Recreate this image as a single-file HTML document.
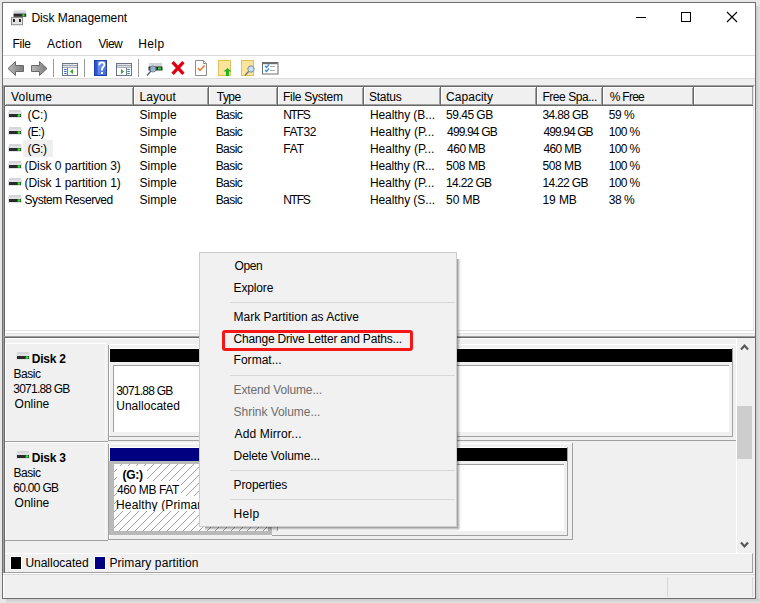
<!DOCTYPE html>
<html><head><meta charset="utf-8"><style>
html,body{margin:0;padding:0;}
body{width:760px;height:603px;position:relative;overflow:hidden;background:#e7e7e7;font-family:"Liberation Sans",sans-serif;}
.r{position:absolute;}
.t{position:absolute;font-size:12.0px;line-height:12px;white-space:pre;color:#000;}
</style></head><body>
<div class="r" style="left:756px;top:6px;width:4px;height:597px;background:linear-gradient(to right, #cbcbcb, #e2e2e2);"></div>
<div class="r" style="left:6px;top:599px;width:754px;height:4px;background:linear-gradient(to bottom, #cbcbcb, #e2e2e2);"></div>
<div class="r" style="left:2px;top:2px;width:754px;height:597px;background:#fff;box-sizing:border-box;border:1px solid #6f6f6f"></div>
<svg class="r" style="left:10px;top:9px" width="18" height="17" viewBox="0 0 18 17">
<defs><linearGradient id="dg" x1="0" y1="0" x2="0" y2="1"><stop offset="0" stop-color="#eceef0"/><stop offset="1" stop-color="#c4c7cb"/></linearGradient></defs>
<rect x="3.5" y="0.7" width="12.7" height="4.2" rx="1" fill="url(#dg)"/>
<rect x="3.5" y="4.7" width="12.7" height="3.1" fill="#2a2a2a"/>
<circle cx="13.5" cy="6.3" r="1.6" fill="#33ff33" fill-opacity="0.35"/>
<circle cx="13.5" cy="6.3" r="1" fill="#33ee33"/>
<rect x="1.5" y="8.5" width="11" height="7.2" fill="#e4e4e4" stroke="#8c8c8c" stroke-width="1"/>
<rect x="3" y="10" width="1.9" height="3" fill="#1a1a1a"/>
<rect x="9" y="10" width="1.9" height="3" fill="#1a1a1a"/>
</svg>
<div class="r" style="left:636px;top:17px;width:10px;height:1px;background:#000;"></div>
<div class="r" style="left:681px;top:12px;width:10px;height:10px;background:transparent;box-sizing:border-box;border:1px solid #000"></div>
<svg class="r" style="left:726px;top:11px" width="12" height="12" viewBox="0 0 12 12"><path d="M1 1 L11 11 M11 1 L1 11" stroke="#000" stroke-width="1.1"/></svg>
<div class="r" style="left:3px;top:55px;width:752px;height:1px;background:#d9d9d9;"></div>
<svg class="r" style="left:7px;top:60px" width="42" height="17" viewBox="0 0 42 17">
<defs><linearGradient id="ag" x1="0" y1="0" x2="1" y2="0"><stop offset="0" stop-color="#b8b8b8"/><stop offset="1" stop-color="#7c7c7c"/></linearGradient></defs>
<path d="M1 8.5 L8.5 1.5 L8.5 5.5 L16.5 5.5 L16.5 11.5 L8.5 11.5 L8.5 15.5 Z" fill="url(#ag)" stroke="#6a6a6a" stroke-width="1"/>
<path d="M40 8.5 L32.5 1.5 L32.5 5.5 L24.5 5.5 L24.5 11.5 L32.5 11.5 L32.5 15.5 Z" fill="url(#ag)" stroke="#6a6a6a" stroke-width="1"/>
</svg>
<div class="r" style="left:53px;top:59px;width:1px;height:18px;background:#9a9a9a;"></div>
<div class="r" style="left:84px;top:59px;width:1px;height:18px;background:#9a9a9a;"></div>
<div class="r" style="left:138px;top:59px;width:1px;height:18px;background:#9a9a9a;"></div>
<svg class="r" style="left:62px;top:63px" width="16" height="13" viewBox="0 0 16 13">
<rect x="0.5" y="0.5" width="15" height="12" fill="#fff" stroke="#6a7688" stroke-width="1"/>
<rect x="1" y="1" width="14" height="1.4" fill="#dde2e8"/>
<rect x="11.6" y="1.2" width="1" height="1" fill="#fff"/><rect x="13.4" y="1.2" width="1" height="1" fill="#fff"/>
<rect x="1" y="2.4" width="14" height="0.9" fill="#6a7688"/>
<rect x="1" y="3.3" width="14" height="1" fill="#dde2e8"/>
<rect x="1" y="4.3" width="14" height="0.7" fill="#8a94a4"/>
<rect x="2" y="6.0" width="2.6" height="1.1" rx="0.5" fill="#2f6fc4"/><rect x="2" y="8.0" width="2.6" height="1.1" rx="0.5" fill="#2f6fc4"/><rect x="2" y="10.0" width="2.6" height="1.1" rx="0.5" fill="#2f6fc4"/><rect x="4.9" y="4.8" width="1" height="7.4" fill="#6a7688"/><path d="M8 8.6 L11 5.9 L11 11.3 Z" fill="#2eac22"/>
</svg>
<svg class="r" style="left:94px;top:60px" width="14" height="17" viewBox="0 0 14 17">
<defs><linearGradient id="hg" x1="0" y1="0" x2="1" y2="1"><stop offset="0" stop-color="#7a9cf0"/><stop offset="1" stop-color="#4068d4"/></linearGradient></defs>
<rect x="0" y="0" width="13" height="16" fill="#1f3fae"/>
<rect x="1" y="1" width="2.5" height="14" fill="#2d54cc"/>
<rect x="3.5" y="1" width="8.5" height="14" fill="url(#hg)"/>
<path d="M5.3 5.2 C5.3 3.2, 6.6 2.4, 7.9 2.4 C9.3 2.4, 10.4 3.3, 10.4 4.8 C10.4 6.6, 8 7, 8 9.2 L8 10.6" stroke="#fff" stroke-width="1.9" fill="none"/>
<rect x="7" y="12" width="2" height="2" fill="#fff"/>
</svg>
<svg class="r" style="left:116px;top:63px" width="16" height="13" viewBox="0 0 16 13">
<rect x="0.5" y="0.5" width="15" height="12" fill="#fff" stroke="#6a7688" stroke-width="1"/>
<rect x="1" y="1" width="14" height="1.4" fill="#dde2e8"/>
<rect x="11.6" y="1.2" width="1" height="1" fill="#fff"/><rect x="13.4" y="1.2" width="1" height="1" fill="#fff"/>
<rect x="1" y="2.4" width="14" height="0.9" fill="#6a7688"/>
<rect x="1" y="3.3" width="14" height="1" fill="#dde2e8"/>
<rect x="1" y="4.3" width="14" height="0.7" fill="#8a94a4"/>
<rect x="11.3" y="6.0" width="2.6" height="1.1" rx="0.5" fill="#2f6fc4"/><rect x="11.3" y="8.0" width="2.6" height="1.1" rx="0.5" fill="#2f6fc4"/><rect x="11.3" y="10.0" width="2.6" height="1.1" rx="0.5" fill="#2f6fc4"/><rect x="10.1" y="4.8" width="1" height="7.4" fill="#6a7688"/><path d="M8 8.6 L5 5.9 L5 11.3 Z" fill="#2eac22"/>
</svg>
<svg class="r" style="left:146px;top:62px" width="17" height="15" viewBox="0 0 17 15">
<rect x="3" y="1" width="13" height="4" fill="#d0d3d8"/>
<rect x="2.5" y="4.5" width="14" height="4" fill="#2e2e2e"/>
<rect x="12" y="5.5" width="3" height="2" fill="#33e033"/>
<circle cx="7" cy="7" r="3" fill="#a9c8e8" fill-opacity="0.85" stroke="#6f7f90" stroke-width="1"/>
<path d="M5 9 L1 13.5" stroke="#607080" stroke-width="1.6"/>
</svg>
<svg class="r" style="left:170px;top:60px" width="16" height="16" viewBox="0 0 16 16"><path d="M2.6 2.1 L13.4 13.9 M13.4 2.1 L2.6 13.9" stroke="#dc0012" stroke-width="3.3"/></svg>
<svg class="r" style="left:194px;top:60px" width="14" height="17" viewBox="0 0 14 17">
<path d="M1.5 0.5 L9.5 0.5 L12.5 3.5 L12.5 15.5 L1.5 15.5 Z" fill="#fff" stroke="#8c8c8c"/>
<path d="M9.5 0.5 L9.5 3.5 L12.5 3.5" fill="#e8e8e8" stroke="#8c8c8c"/>
<path d="M4 8 L6 10.5 L10.5 5.5" fill="none" stroke="#f07020" stroke-width="1.4"/>
</svg>
<svg class="r" style="left:218px;top:60px" width="15" height="17" viewBox="0 0 15 17">
<rect x="0.5" y="0.5" width="12" height="15" fill="#fce59a" stroke="#e0c060"/>
<path d="M9.5 8 L13.5 11.5 L11 11.5 L11 16 L8 16 L8 11.5 L5.5 11.5 Z" fill="#22b422"/>
</svg>
<svg class="r" style="left:241px;top:60px" width="15" height="17" viewBox="0 0 15 17">
<rect x="0.5" y="0.5" width="12" height="15" fill="#fce59a" stroke="#e0c060"/>
<circle cx="10" cy="9" r="3.2" fill="#c8e0f4" stroke="#7a8a9a"/>
<path d="M7.6 11.5 L4 15.5" stroke="#6a7a8a" stroke-width="1.4"/>
</svg>
<svg class="r" style="left:262px;top:62px" width="17" height="13" viewBox="0 0 17 13">
<rect x="0.5" y="0.5" width="15.5" height="11.5" fill="#fff" stroke="#6d6d6d" stroke-width="1"/><rect x="1" y="1" width="14.5" height="1.2" fill="#6d6d6d"/>
<path d="M3 4 L4.5 5.5 L7 2.5 M3 8 L4.5 9.5 L7 6.5" fill="none" stroke="#2d8ae0" stroke-width="1.2"/>
<rect x="8" y="4" width="5" height="1" fill="#b0b0b0"/><rect x="8" y="8" width="5" height="1" fill="#b0b0b0"/>
</svg>
<div class="r" style="left:3px;top:78px;width:752px;height:520px;background:#f0f0f0;"></div>
<div class="r" style="left:3px;top:78px;width:752px;height:1px;background:#dcdcdc;"></div>
<div class="r" style="left:3px;top:85px;width:752px;height:247px;background:#fff;box-sizing:border-box;border-top:1px solid #a0a0a0;border-left:1px solid #a0a0a0;border-right:1px solid #fff;border-bottom:1px solid #fff"></div>
<div class="r" style="left:4px;top:86px;width:750px;height:245px;background:#fff;box-sizing:border-box;border-top:1px solid #696969;border-left:1px solid #696969;border-right:1px solid #e3e3e3;border-bottom:1px solid #e3e3e3"></div>
<div class="r" style="left:5px;top:87px;width:748px;height:19px;background:#f0f0f0;box-sizing:border-box;border-top:1px solid #fff;border-bottom:1px solid #696969"></div>
<div class="r" style="left:5px;top:104px;width:748px;height:1px;background:#a0a0a0;"></div>
<div class="r" style="left:5px;top:87px;width:1px;height:18px;background:#fff;"></div>
<div class="r" style="left:132px;top:88px;width:1px;height:16px;background:#a0a0a0;"></div>
<div class="r" style="left:133px;top:87px;width:1px;height:18px;background:#696969;"></div>
<div class="r" style="left:134px;top:88px;width:1px;height:16px;background:#fff;"></div>
<div class="r" style="left:207px;top:88px;width:1px;height:16px;background:#a0a0a0;"></div>
<div class="r" style="left:208px;top:87px;width:1px;height:18px;background:#696969;"></div>
<div class="r" style="left:209px;top:88px;width:1px;height:16px;background:#fff;"></div>
<div class="r" style="left:276px;top:88px;width:1px;height:16px;background:#a0a0a0;"></div>
<div class="r" style="left:277px;top:87px;width:1px;height:18px;background:#696969;"></div>
<div class="r" style="left:278px;top:88px;width:1px;height:16px;background:#fff;"></div>
<div class="r" style="left:362px;top:88px;width:1px;height:16px;background:#a0a0a0;"></div>
<div class="r" style="left:363px;top:87px;width:1px;height:18px;background:#696969;"></div>
<div class="r" style="left:364px;top:88px;width:1px;height:16px;background:#fff;"></div>
<div class="r" style="left:439px;top:88px;width:1px;height:16px;background:#a0a0a0;"></div>
<div class="r" style="left:440px;top:87px;width:1px;height:18px;background:#696969;"></div>
<div class="r" style="left:441px;top:88px;width:1px;height:16px;background:#fff;"></div>
<div class="r" style="left:535px;top:88px;width:1px;height:16px;background:#a0a0a0;"></div>
<div class="r" style="left:536px;top:87px;width:1px;height:18px;background:#696969;"></div>
<div class="r" style="left:537px;top:88px;width:1px;height:16px;background:#fff;"></div>
<div class="r" style="left:601px;top:88px;width:1px;height:16px;background:#a0a0a0;"></div>
<div class="r" style="left:602px;top:87px;width:1px;height:18px;background:#696969;"></div>
<div class="r" style="left:603px;top:88px;width:1px;height:16px;background:#fff;"></div>
<div class="r" style="left:692px;top:88px;width:1px;height:16px;background:#a0a0a0;"></div>
<div class="r" style="left:693px;top:87px;width:1px;height:18px;background:#696969;"></div>
<div class="r" style="left:694px;top:88px;width:1px;height:16px;background:#fff;"></div>
<div class="r" style="left:752px;top:87px;width:1px;height:18px;background:#a0a0a0;"></div>
<div class="r" style="left:23px;top:140px;width:30px;height:17px;background:#efefef;"></div>
<svg class="r" style="left:8px;top:110px" width="14" height="8" viewBox="0 0 14 8">
<rect x="1" y="0" width="12" height="2" fill="#d4d6da"/>
<rect x="0" y="2" width="14" height="6" fill="#dfe1e4"/>
<rect x="1" y="4" width="12" height="3" fill="#2a2a2a"/>
<rect x="9.5" y="4.5" width="3" height="2" fill="#22dd22"/>
<rect x="10.5" y="4" width="1" height="3" fill="#33ee33"/>
</svg>
<svg class="r" style="left:8px;top:127px" width="14" height="8" viewBox="0 0 14 8">
<rect x="1" y="0" width="12" height="2" fill="#d4d6da"/>
<rect x="0" y="2" width="14" height="6" fill="#dfe1e4"/>
<rect x="1" y="4" width="12" height="3" fill="#2a2a2a"/>
<rect x="9.5" y="4.5" width="3" height="2" fill="#22dd22"/>
<rect x="10.5" y="4" width="1" height="3" fill="#33ee33"/>
</svg>
<svg class="r" style="left:8px;top:144px" width="14" height="8" viewBox="0 0 14 8">
<rect x="1" y="0" width="12" height="2" fill="#d4d6da"/>
<rect x="0" y="2" width="14" height="6" fill="#dfe1e4"/>
<rect x="1" y="4" width="12" height="3" fill="#2a2a2a"/>
<rect x="9.5" y="4.5" width="3" height="2" fill="#22dd22"/>
<rect x="10.5" y="4" width="1" height="3" fill="#33ee33"/>
</svg>
<svg class="r" style="left:8px;top:161px" width="14" height="8" viewBox="0 0 14 8">
<rect x="1" y="0" width="12" height="2" fill="#d4d6da"/>
<rect x="0" y="2" width="14" height="6" fill="#dfe1e4"/>
<rect x="1" y="4" width="12" height="3" fill="#2a2a2a"/>
<rect x="9.5" y="4.5" width="3" height="2" fill="#22dd22"/>
<rect x="10.5" y="4" width="1" height="3" fill="#33ee33"/>
</svg>
<svg class="r" style="left:8px;top:178px" width="14" height="8" viewBox="0 0 14 8">
<rect x="1" y="0" width="12" height="2" fill="#d4d6da"/>
<rect x="0" y="2" width="14" height="6" fill="#dfe1e4"/>
<rect x="1" y="4" width="12" height="3" fill="#2a2a2a"/>
<rect x="9.5" y="4.5" width="3" height="2" fill="#22dd22"/>
<rect x="10.5" y="4" width="1" height="3" fill="#33ee33"/>
</svg>
<svg class="r" style="left:8px;top:195px" width="14" height="8" viewBox="0 0 14 8">
<rect x="1" y="0" width="12" height="2" fill="#d4d6da"/>
<rect x="0" y="2" width="14" height="6" fill="#dfe1e4"/>
<rect x="1" y="4" width="12" height="3" fill="#2a2a2a"/>
<rect x="9.5" y="4.5" width="3" height="2" fill="#22dd22"/>
<rect x="10.5" y="4" width="1" height="3" fill="#33ee33"/>
</svg>
<div class="r" style="left:3px;top:332px;width:752px;height:1px;background:#fff;"></div>
<div class="r" style="left:3px;top:333px;width:752px;height:1px;background:#e3e3e3;"></div>
<div class="r" style="left:3px;top:330px;width:1px;height:8px;background:#a0a0a0;"></div>
<div class="r" style="left:4px;top:330px;width:1px;height:8px;background:#696969;"></div>
<div class="r" style="left:5px;top:331px;width:1px;height:6px;background:#fff;"></div>
<div class="r" style="left:3px;top:336px;width:752px;height:1px;background:#a0a0a0;"></div>
<div class="r" style="left:4px;top:337px;width:751px;height:1px;background:#696969;"></div>
<div class="r" style="left:3px;top:336px;width:1px;height:237px;background:#a0a0a0;"></div>
<div class="r" style="left:4px;top:337px;width:1px;height:236px;background:#696969;"></div>
<div class="r" style="left:5px;top:338px;width:732px;height:1px;background:#fff;"></div>
<div class="r" style="left:5px;top:343px;width:103px;height:98px;background:#f0f0f0;"></div>
<div class="r" style="left:5px;top:343px;width:102px;height:1px;background:#fff;"></div>
<div class="r" style="left:5px;top:343px;width:1px;height:98px;background:#fff;"></div>
<div class="r" style="left:105px;top:344px;width:1px;height:96px;background:#fafafa;"></div>
<div class="r" style="left:5px;top:441px;width:103px;height:1px;background:#a0a0a0;"></div>
<svg class="r" style="left:16px;top:352px" width="14" height="8" viewBox="0 0 14 8">
<rect x="1" y="0" width="12" height="2" fill="#d4d6da"/>
<rect x="0" y="2" width="14" height="6" fill="#dfe1e4"/>
<rect x="1" y="4" width="12" height="3" fill="#2a2a2a"/>
<rect x="9.5" y="4.5" width="3" height="2" fill="#22dd22"/>
<rect x="10.5" y="4" width="1" height="3" fill="#33ee33"/>
</svg>
<div class="r" style="left:108px;top:345px;width:1px;height:96px;background:#a0a0a0;"></div>
<div class="r" style="left:109px;top:345px;width:1px;height:96px;background:#fff;"></div>
<div class="r" style="left:5px;top:442px;width:103px;height:98px;background:#f0f0f0;"></div>
<div class="r" style="left:5px;top:442px;width:102px;height:1px;background:#fff;"></div>
<div class="r" style="left:5px;top:442px;width:1px;height:98px;background:#fff;"></div>
<div class="r" style="left:105px;top:443px;width:1px;height:96px;background:#fafafa;"></div>
<div class="r" style="left:5px;top:540px;width:103px;height:1px;background:#a0a0a0;"></div>
<svg class="r" style="left:16px;top:451px" width="14" height="8" viewBox="0 0 14 8">
<rect x="1" y="0" width="12" height="2" fill="#d4d6da"/>
<rect x="0" y="2" width="14" height="6" fill="#dfe1e4"/>
<rect x="1" y="4" width="12" height="3" fill="#2a2a2a"/>
<rect x="9.5" y="4.5" width="3" height="2" fill="#22dd22"/>
<rect x="10.5" y="4" width="1" height="3" fill="#33ee33"/>
</svg>
<div class="r" style="left:108px;top:444px;width:1px;height:96px;background:#a0a0a0;"></div>
<div class="r" style="left:109px;top:444px;width:1px;height:96px;background:#fff;"></div>
<div class="r" style="left:108px;top:344px;width:628px;height:1px;background:#fff;"></div>
<div class="r" style="left:108px;top:440px;width:628px;height:1px;background:#a0a0a0;"></div>
<div class="r" style="left:110px;top:348px;width:623px;height:1px;background:#fff;"></div>
<div class="r" style="left:110px;top:349px;width:622px;height:13px;background:#000;"></div>
<div class="r" style="left:732px;top:348px;width:1px;height:88px;background:#a0a0a0;"></div>
<div class="r" style="left:109px;top:436px;width:624px;height:1px;background:#a0a0a0;"></div>
<div class="r" style="left:113px;top:365px;width:616px;height:67px;background:#fff;"></div>
<div class="r" style="left:113px;top:365px;width:616px;height:1px;background:#a0a0a0;"></div>
<div class="r" style="left:113px;top:365px;width:1px;height:67px;background:#a0a0a0;"></div>
<div class="r" style="left:108px;top:443px;width:465px;height:1px;background:#fff;"></div>
<div class="r" style="left:108px;top:539px;width:465px;height:1px;background:#a0a0a0;"></div>
<div class="r" style="left:572px;top:443px;width:1px;height:97px;background:#a0a0a0;"></div>
<div class="r" style="left:110px;top:447px;width:162px;height:1px;background:#fff;"></div>
<div class="r" style="left:110px;top:448px;width:162px;height:13px;background:#000080;"></div>
<svg class="r" style="left:109px;top:461px" width="163" height="74" viewBox="0 0 163 74">
<defs><pattern id="hp" patternUnits="userSpaceOnUse" x="0" y="0" width="8" height="8"><path d="M0 8 L8 0 M-2 2 L2 -2 M6 10 L10 6" stroke="#a0a0a0" stroke-width="1"/></pattern></defs>
<rect x="0" y="0" width="163" height="74" fill="#b9b9b9"/>
<rect x="5" y="3" width="154" height="67" fill="#fff"/>
<rect x="5" y="3" width="154" height="67" fill="url(#hp)"/>
</svg>
<div class="r" style="left:117px;top:466px;width:30px;height:15px;background:#fff;"></div>
<div class="r" style="left:117px;top:481px;width:64px;height:15px;background:#fff;"></div>
<div class="r" style="left:117px;top:496px;width:83px;height:15px;background:#fff;"></div>
<div class="r" style="left:276px;top:447px;width:292px;height:1px;background:#fff;"></div>
<div class="r" style="left:276px;top:448px;width:291px;height:13px;background:#000;"></div>
<div class="r" style="left:567px;top:447px;width:1px;height:89px;background:#a0a0a0;"></div>
<div class="r" style="left:272px;top:535px;width:296px;height:1px;background:#a0a0a0;"></div>
<div class="r" style="left:277px;top:464px;width:287px;height:67px;background:#fff;"></div>
<div class="r" style="left:277px;top:464px;width:287px;height:1px;background:#a0a0a0;"></div>
<div class="r" style="left:277px;top:464px;width:1px;height:67px;background:#a0a0a0;"></div>
<div class="r" style="left:736px;top:338px;width:1px;height:215px;background:#fff;"></div>
<div class="r" style="left:737px;top:338px;width:16px;height:215px;background:#f0f0f0;"></div>
<svg class="r" style="left:740px;top:343px" width="9" height="8" viewBox="0 0 9 8"><path d="M1 6.5 L4.5 2.5 L8 6.5" fill="none" stroke="#555" stroke-width="2.1"/></svg>
<svg class="r" style="left:740px;top:541px" width="9" height="8" viewBox="0 0 9 8"><path d="M1 1.5 L4.5 5.5 L8 1.5" fill="none" stroke="#555" stroke-width="2.1"/></svg>
<div class="r" style="left:737px;top:406px;width:15px;height:53px;background:#cdcdcd;"></div>
<div class="r" style="left:5px;top:553px;width:748px;height:20px;background:#f0f0f0;box-sizing:border-box;border-top:1px solid #fff;border-right:1px solid #a0a0a0;border-bottom:1px solid #a0a0a0"></div>
<div class="r" style="left:10px;top:556px;width:12px;height:14px;background:#000;box-sizing:border-box;border:1px solid #fff"></div>
<div class="r" style="left:94px;top:556px;width:12px;height:14px;background:#000080;box-sizing:border-box;border:1px solid #fff"></div>
<div class="r" style="left:3px;top:573px;width:752px;height:1px;background:#fff;"></div>
<div class="r" style="left:3px;top:574px;width:752px;height:1px;background:#dadada;"></div>
<div class="r" style="left:3px;top:575px;width:752px;height:23px;background:#f0f0f0;box-sizing:border-box;border-left:1px solid #fff"></div>
<div class="r" style="left:667px;top:577px;width:1px;height:20px;background:#d7d7d7;"></div>
<div class="r" style="left:752px;top:577px;width:1px;height:20px;background:#d7d7d7;"></div>
<div class="r" style="left:2px;top:2px;width:754px;height:597px;background:transparent;box-sizing:border-box;border:1px solid #6f6f6f"></div>
<div class="t" style="left:31.40px;top:12.00px;letter-spacing:-0.071px">Disk Management</div>
<div class="t" style="left:12.50px;top:37.50px;letter-spacing:-0.267px">File</div>
<div class="t" style="left:47.00px;top:37.50px;letter-spacing:0.300px">Action</div>
<div class="t" style="left:98.50px;top:37.50px;letter-spacing:-0.533px">View</div>
<div class="t" style="left:138.20px;top:37.50px;letter-spacing:0.400px">Help</div>
<div class="t" style="left:11.00px;top:91.00px;letter-spacing:0.200px">Volume</div>
<div class="t" style="left:139.40px;top:91.00px;letter-spacing:0.080px">Layout</div>
<div class="t" style="left:216.80px;top:91.00px;letter-spacing:-0.567px">Type</div>
<div class="t" style="left:283.00px;top:91.00px;letter-spacing:-0.280px">File System</div>
<div class="t" style="left:369.10px;top:91.00px;letter-spacing:-0.280px">Status</div>
<div class="t" style="left:446.10px;top:91.00px;letter-spacing:0.029px">Capacity</div>
<div class="t" style="left:542.40px;top:91.00px;letter-spacing:-0.440px">Free Spa...</div>
<div class="t" style="left:609.80px;top:91.00px;letter-spacing:-0.740px">% Free</div>
<div class="t" style="left:27.60px;top:109.00px;letter-spacing:-0.067px">(C:)</div>
<div class="t" style="left:139.40px;top:109.00px;letter-spacing:0.100px">Simple</div>
<div class="t" style="left:215.70px;top:109.00px;letter-spacing:-0.575px">Basic</div>
<div class="t" style="left:283.20px;top:109.00px;letter-spacing:-1.233px">NTFS</div>
<div class="t" style="left:369.90px;top:109.00px;letter-spacing:-0.075px">Healthy (B...</div>
<div class="t" style="left:446.10px;top:109.00px;letter-spacing:-0.514px">59.45 GB</div>
<div class="t" style="left:542.40px;top:109.00px;letter-spacing:-0.629px">34.88 GB</div>
<div class="t" style="left:608.80px;top:109.00px;letter-spacing:-0.533px">59 %</div>
<div class="t" style="left:27.60px;top:126.00px;letter-spacing:-0.767px">(E:)</div>
<div class="t" style="left:139.40px;top:126.00px;letter-spacing:0.100px">Simple</div>
<div class="t" style="left:215.70px;top:126.00px;letter-spacing:-0.575px">Basic</div>
<div class="t" style="left:283.20px;top:126.00px;letter-spacing:-0.300px">FAT32</div>
<div class="t" style="left:369.90px;top:126.00px">Healthy (P...</div>
<div class="t" style="left:447.10px;top:126.00px;letter-spacing:-0.850px">499.94 GB</div>
<div class="t" style="left:543.40px;top:126.00px;letter-spacing:-0.900px">499.94 GB</div>
<div class="t" style="left:608.80px;top:126.00px;letter-spacing:-0.650px">100 %</div>
<div class="t" style="left:27.60px;top:143.00px;letter-spacing:-0.400px">(G:)</div>
<div class="t" style="left:139.40px;top:143.00px;letter-spacing:0.100px">Simple</div>
<div class="t" style="left:215.70px;top:143.00px;letter-spacing:-0.575px">Basic</div>
<div class="t" style="left:283.20px;top:143.00px;letter-spacing:-0.150px">FAT</div>
<div class="t" style="left:369.90px;top:143.00px">Healthy (P...</div>
<div class="t" style="left:447.10px;top:143.00px;letter-spacing:-0.520px">460 MB</div>
<div class="t" style="left:543.40px;top:143.00px;letter-spacing:-0.620px">460 MB</div>
<div class="t" style="left:608.80px;top:143.00px;letter-spacing:-0.650px">100 %</div>
<div class="t" style="left:24.50px;top:160.00px;letter-spacing:-0.053px">(Disk 0 partition 3)</div>
<div class="t" style="left:139.40px;top:160.00px;letter-spacing:0.100px">Simple</div>
<div class="t" style="left:215.70px;top:160.00px;letter-spacing:-0.575px">Basic</div>
<div class="t" style="left:369.90px;top:160.00px;letter-spacing:-0.158px">Healthy (R...</div>
<div class="t" style="left:446.10px;top:160.00px;letter-spacing:-0.320px">508 MB</div>
<div class="t" style="left:542.40px;top:160.00px;letter-spacing:-0.420px">508 MB</div>
<div class="t" style="left:608.80px;top:160.00px;letter-spacing:-0.650px">100 %</div>
<div class="t" style="left:24.50px;top:177.00px;letter-spacing:-0.053px">(Disk 1 partition 1)</div>
<div class="t" style="left:139.40px;top:177.00px;letter-spacing:0.100px">Simple</div>
<div class="t" style="left:215.70px;top:177.00px;letter-spacing:-0.575px">Basic</div>
<div class="t" style="left:369.90px;top:177.00px">Healthy (P...</div>
<div class="t" style="left:446.10px;top:177.00px;letter-spacing:-0.671px">14.22 GB</div>
<div class="t" style="left:542.40px;top:177.00px;letter-spacing:-0.671px">14.22 GB</div>
<div class="t" style="left:608.80px;top:177.00px;letter-spacing:-0.650px">100 %</div>
<div class="t" style="left:24.50px;top:194.00px;letter-spacing:-0.429px">System Reserved</div>
<div class="t" style="left:139.40px;top:194.00px;letter-spacing:0.100px">Simple</div>
<div class="t" style="left:215.70px;top:194.00px;letter-spacing:-0.575px">Basic</div>
<div class="t" style="left:283.20px;top:194.00px;letter-spacing:-1.233px">NTFS</div>
<div class="t" style="left:369.90px;top:194.00px;letter-spacing:-0.075px">Healthy (S...</div>
<div class="t" style="left:446.10px;top:194.00px;letter-spacing:-0.125px">50 MB</div>
<div class="t" style="left:542.40px;top:194.00px;letter-spacing:-0.050px">19 MB</div>
<div class="t" style="left:608.80px;top:194.00px;letter-spacing:-0.533px">38 %</div>
<div class="t" style="left:31.70px;top:352.70px;letter-spacing:-0.200px;font-weight:bold">Disk 2</div>
<div class="t" style="left:13.60px;top:367.80px;letter-spacing:-0.500px">Basic</div>
<div class="t" style="left:13.30px;top:383.00px;letter-spacing:-0.778px">3071.88 GB</div>
<div class="t" style="left:14.60px;top:398.00px">Online</div>
<div class="t" style="left:31.70px;top:451.70px;letter-spacing:-0.200px;font-weight:bold">Disk 3</div>
<div class="t" style="left:13.60px;top:466.80px;letter-spacing:-0.500px">Basic</div>
<div class="t" style="left:13.30px;top:482.00px;letter-spacing:-0.714px">60.00 GB</div>
<div class="t" style="left:14.60px;top:497.00px">Online</div>
<div class="t" style="left:116.20px;top:384.70px;letter-spacing:-0.778px">3071.88 GB</div>
<div class="t" style="left:116.20px;top:399.70px;letter-spacing:0.030px">Unallocated</div>
<div class="t" style="left:122.60px;top:469.00px;letter-spacing:-0.333px;font-weight:bold">(G:)</div>
<div class="t" style="left:117.00px;top:484.00px;letter-spacing:-0.389px">460 MB FAT</div>
<div class="t" style="left:116.00px;top:499.00px;letter-spacing:0.143px;width:83.00px;overflow:hidden">Healthy (Primar</div>
<div class="t" style="left:25.40px;top:556.80px;letter-spacing:-0.020px">Unallocated</div>
<div class="t" style="left:109.40px;top:556.80px;letter-spacing:0.100px">Primary partition</div>
<div class="r" style="left:457px;top:259px;width:4px;height:268px;background:linear-gradient(to right, rgba(0,0,0,0.42), rgba(0,0,0,0.12) 60%, rgba(0,0,0,0));"></div>
<div class="r" style="left:205px;top:527px;width:252px;height:4px;background:linear-gradient(to bottom, rgba(0,0,0,0.42), rgba(0,0,0,0.12) 60%, rgba(0,0,0,0));"></div>
<div class="r" style="left:457px;top:527px;width:4px;height:4px;background:radial-gradient(circle at 0 0, rgba(0,0,0,0.42), rgba(0,0,0,0) 4px);"></div>
<div class="r" style="left:199px;top:252px;width:258px;height:275px;background:#f1f1f1;box-sizing:border-box;border:1px solid #cccccc"></div>
<div class="r" style="left:230px;top:302px;width:225px;height:1px;background:#d7d7d7;"></div>
<div class="r" style="left:230px;top:375px;width:225px;height:1px;background:#d7d7d7;"></div>
<div class="r" style="left:230px;top:470px;width:225px;height:1px;background:#d7d7d7;"></div>
<div class="r" style="left:230px;top:499px;width:225px;height:1px;background:#d7d7d7;"></div>
<div class="r" style="left:222px;top:330px;width:191px;height:21px;background:transparent;box-sizing:border-box;border:3px solid #f51616;border-radius:3px"></div>
<div class="t" style="left:234.60px;top:260.00px;letter-spacing:-0.400px">Open</div>
<div class="t" style="left:233.60px;top:282.00px;letter-spacing:-0.150px">Explore</div>
<div class="t" style="left:233.60px;top:310.60px">Mark Partition as Active</div>
<div class="t" style="left:233.60px;top:332.50px;letter-spacing:-0.200px">Change Drive Letter and Paths...</div>
<div class="t" style="left:233.60px;top:354.30px;letter-spacing:0.013px">Format...</div>
<div class="t" style="left:233.60px;top:384.00px;letter-spacing:-0.147px;color:#6d6d6d">Extend Volume...</div>
<div class="t" style="left:233.60px;top:406.00px;letter-spacing:-0.040px;color:#6d6d6d">Shrink Volume...</div>
<div class="t" style="left:234.60px;top:428.00px;letter-spacing:0.133px">Add Mirror...</div>
<div class="t" style="left:233.60px;top:450.00px;letter-spacing:-0.107px">Delete Volume...</div>
<div class="t" style="left:233.60px;top:479.00px;letter-spacing:-0.122px">Properties</div>
<div class="t" style="left:233.60px;top:508.00px;letter-spacing:0.333px">Help</div>
</body></html>
